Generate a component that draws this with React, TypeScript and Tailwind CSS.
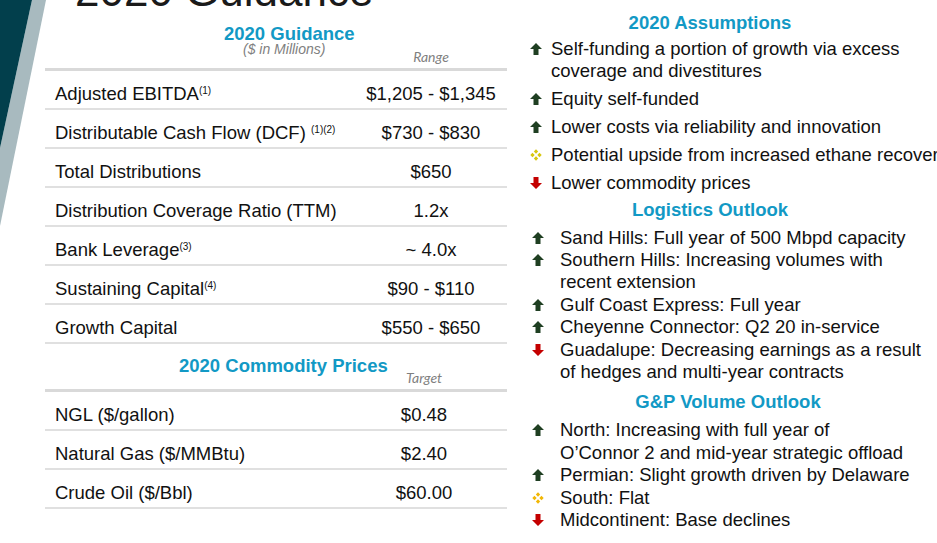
import React from 'react';

type Dir = 'up' | 'down' | 'flat';

type Item = { dir: Dir; lines: string[]; flat?: string };

const guidance = [
  { label: 'Adjusted EBITDA', sup: '(1)', value: '$1,205 - $1,345' },
  { label: 'Distributable Cash Flow (DCF) ', sup: '(1)(2)', value: '$730 - $830' },
  { label: 'Total Distributions', value: '$650' },
  { label: 'Distribution Coverage Ratio (TTM)', value: '1.2x' },
  { label: 'Bank Leverage', sup: '(3)', value: '~ 4.0x' },
  { label: 'Sustaining Capital', sup: '(4)', value: '$90 - $110' },
  { label: 'Growth Capital', value: '$550 - $650' },
];

const prices = [
  { label: 'NGL ($/gallon)', value: '$0.48' },
  { label: 'Natural Gas ($/MMBtu)', value: '$2.40' },
  { label: 'Crude Oil ($/Bbl)', value: '$60.00' },
];

const assumptions: Item[] = [
  { dir: 'up', lines: ['Self-funding a portion of growth via excess', 'coverage and divestitures'] },
  { dir: 'up', lines: ['Equity self-funded'] },
  { dir: 'up', lines: ['Lower costs via reliability and innovation'] },
  { dir: 'flat', flat: '#d8c70e', lines: ['Potential upside from increased ethane recovery'] },
  { dir: 'down', lines: ['Lower commodity prices'] },
];

const logistics: Item[] = [
  { dir: 'up', lines: ['Sand Hills: Full year of 500 Mbpd capacity'] },
  { dir: 'up', lines: ['Southern Hills: Increasing volumes with', 'recent extension'] },
  { dir: 'up', lines: ['Gulf Coast Express: Full year'] },
  { dir: 'up', lines: ['Cheyenne Connector: Q2 20 in-service'] },
  { dir: 'down', lines: ['Guadalupe: Decreasing earnings as a result', 'of hedges and multi-year contracts'] },
];

const gp: Item[] = [
  { dir: 'up', lines: ['North: Increasing with full year of', 'O\u2019Connor 2 and mid-year strategic offload'] },
  { dir: 'up', lines: ['Permian: Slight growth driven by Delaware'] },
  { dir: 'flat', flat: '#f2b705', lines: ['South: Flat'] },
  { dir: 'down', lines: ['Midcontinent: Base declines'] },
];

function Bullet({ dir, flat }: { dir: Dir; flat?: string }) {
  if (dir === 'up') {
    return (
      <svg width="12" height="12" viewBox="0 0 12 12" className="shrink-0 mt-[5px]">
        <polygon points="6,0 12,6 8.5,6 8.5,12 3.5,12 3.5,6 0,6" fill="#1f3f22" />
      </svg>
    );
  }
  if (dir === 'down') {
    return (
      <svg width="12" height="12" viewBox="0 0 12 12" className="shrink-0 mt-[5px]">
        <polygon points="3.5,0 8.5,0 8.5,6 12,6 6,12 0,6 3.5,6" fill="#c40000" />
      </svg>
    );
  }
  // four small diamonds
  return (
    <svg width="12" height="12" viewBox="0 0 12 12" className="shrink-0 mt-[5px]">
      <g fill={flat}>
        <polygon points="6,0.3 8.2,2.5 6,4.7 3.8,2.5" />
        <polygon points="2.5,3.8 4.7,6 2.5,8.2 0.3,6" />
        <polygon points="9.5,3.8 11.7,6 9.5,8.2 7.3,6" />
        <polygon points="6,7.3 8.2,9.5 6,11.7 3.8,9.5" />
      </g>
    </svg>
  );
}

function BulletList({ items, indent, gap, itemGap, leading }: { items: Item[]; indent: string; gap: string; itemGap: string; leading: string }) {
  return (
    <div className={`flex flex-col ${itemGap}`}>
      {items.map((it, i) => (
        <div key={i} className={`flex ${indent} ${gap}`}>
          <Bullet dir={it.dir} flat={it.flat} />
          <div className={`whitespace-nowrap ${leading}`}>
            {it.lines.map((l, j) => (
              <div key={j}>{l}</div>
            ))}
          </div>
        </div>
      ))}
    </div>
  );
}

function Row({ label, sup, value, valueClass }: { label: string; sup?: string; value: string; valueClass: string }) {
  return (
    <div className="flex h-[39px] border-b-2 border-[#e0e0e0] pt-[12px] leading-[21px]">
      <div className="flex-1 min-w-0 pl-[10px] whitespace-pre">
        {label}
        {sup && <span className="relative -top-[6px] text-[10px] leading-none">{sup}</span>}
      </div>
      <div className={`w-[152px] shrink-0 text-center whitespace-nowrap ${valueClass}`}>{value}</div>
    </div>
  );
}

export default function App() {
  return (
    <div className="relative w-[937px] h-[543px] overflow-hidden bg-white text-[#111] text-[18.5px] font-['Liberation_Sans',Arial,sans-serif]">
      {/* Slide corner decoration */}
      <svg className="absolute left-0 top-0" width="50" height="240" viewBox="0 0 50 240">
        <polygon points="32,0 46,0 0,226 0,148" fill="#a8babf" />
        <polygon points="0,0 32,0 0,148" fill="#023f4c" />
      </svg>

      {/* Slide title, cut off at the top */}
      <h1 className="ml-[75px] -mt-[31px] h-[43px] text-[44px] leading-[44px] text-[#1a1a1a] whitespace-nowrap">2020 Guidance</h1>

      <div className="flex">
        {/* Left: tables */}
        <div className="ml-[45px] w-[462px] shrink-0 pt-[11px]">
          <div className="flex items-end border-b-[3px] border-[#d9d9d9] pb-[3px]">
            <div className="flex-1 min-w-0 mb-[8px] whitespace-nowrap">
              <div className="pl-[179px] font-bold text-[#1299c5] leading-[22px]">2020 Guidance</div>
              <div className="pl-[198px] -mt-[4px] text-[14px] leading-[16px] italic text-[#7f7f7f]">($ in Millions)</div>
            </div>
            <div className="w-[152px] shrink-0 text-center text-[14px] leading-[16px] italic text-[#7f7f7f] font-['Lato',sans-serif]">Range</div>
          </div>
          {guidance.map((r) => (
            <Row key={r.label} label={r.label} sup={r.sup} value={r.value} valueClass="" />
          ))}

          <div className="flex items-end border-b-[3px] border-[#d9d9d9] pt-[11px] pb-[3px]">
            <div className="flex-1 min-w-0 mb-[9px] pl-[134px] font-bold text-[#1299c5] leading-[22px] whitespace-nowrap">2020 Commodity Prices</div>
            <div className="w-[152px] shrink-0 mr-[7px] text-center text-[14px] leading-[16px] italic text-[#7f7f7f] font-['Lato',sans-serif]">Target</div>
          </div>
          {prices.map((r) => (
            <Row key={r.label} label={r.label} value={r.value} valueClass="mr-[7px]" />
          ))}
        </div>

        {/* Right: outlook lists */}
        <div className="ml-[13px] flex-1">
          <div className="w-[380px] text-center font-bold text-[#1299c5] leading-[22px] whitespace-nowrap">2020 Assumptions</div>
          <div className="mt-[4px]">
            <BulletList items={assumptions} indent="ml-[10px]" gap="gap-[9px]" itemGap="gap-[6px]" leading="leading-[22px]" />
          </div>

          <div className="mt-[5px] w-[380px] text-center font-bold text-[#1299c5] leading-[22px] whitespace-nowrap">Logistics Outlook</div>
          <div className="mt-[5.5px]">
            <BulletList items={logistics} indent="ml-[12px]" gap="gap-[16px]" itemGap="gap-0" leading="leading-[22.4px]" />
          </div>

          <div className="mt-[8px] ml-[18px] w-[380px] text-center font-bold text-[#1299c5] leading-[22px] whitespace-nowrap">G&amp;P Volume Outlook</div>
          <div className="mt-[6px]">
            <BulletList items={gp} indent="ml-[12px]" gap="gap-[16px]" itemGap="gap-0" leading="leading-[22.4px]" />
          </div>
        </div>
      </div>
    </div>
  );
}
